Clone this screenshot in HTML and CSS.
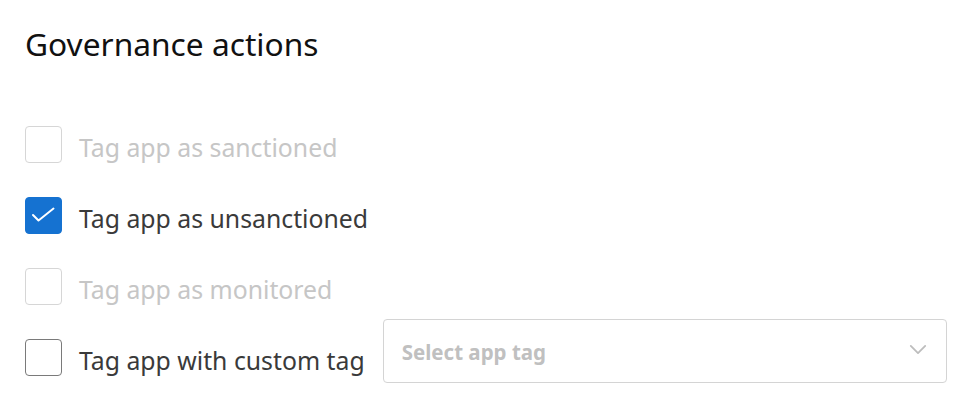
FILE: index.html
```html
<!DOCTYPE html>
<html lang="en">
<head>
<meta charset="utf-8">
<title>Governance actions</title>
<link rel="stylesheet" href="styles.css">
</head>
<body>
<section class="panel">
  <h1 class="title">Governance actions</h1>
  <div class="options">
    <label class="option is-disabled">
      <span class="box"></span>
      <span class="label">Tag app as sanctioned</span>
    </label>
    <label class="option">
      <span class="box is-checked">
        <svg viewBox="0 0 37 37" width="37" height="37"><path d="M8 18 L13.5 23.5 L28.5 11.5" fill="none" stroke="#fff" stroke-width="2" stroke-linecap="round" stroke-linejoin="round"/></svg>
      </span>
      <span class="label">Tag app as unsanctioned</span>
    </label>
    <label class="option is-disabled">
      <span class="box"></span>
      <span class="label">Tag app as monitored</span>
    </label>
    <div class="option option-custom">
      <span class="box"></span>
      <span class="label">Tag app with custom tag</span>
      <div class="select">
        <span class="select-text">Select app tag</span>
        <svg class="chevron" viewBox="0 0 20 12" width="18" height="11"><path d="M2 2 L10 10 L18 2" fill="none" stroke="#bdbdbd" stroke-width="2" stroke-linecap="round" stroke-linejoin="round"/></svg>
      </div>
    </div>
  </div>
</section>
</body>
</html>
```
FILE: styles.css
```css
html, body {
  margin: 0;
  padding: 0;
  background: #ffffff;
}
body {
  font-family: "Noto Sans", "Open Sans", sans-serif;
  color: #333333;
  min-height: 402px;
}
.panel {
  padding: 22px 0 30px 25px;
}
.title {
  margin: 0;
  font-size: 31.7px;
  font-weight: 400;
  line-height: 44px;
  color: #111111;
}
.options {
  display: flex;
  flex-direction: column;
  gap: 34px;
  margin-top: 60px;
}
.option {
  display: flex;
  align-items: center;
  height: 37px;
}
.box {
  box-sizing: border-box;
  width: 37px;
  height: 37px;
  border: 1.5px solid #7a7a7a;
  border-radius: 4px;
  display: flex;
  align-items: center;
  justify-content: center;
  flex: none;
  overflow: hidden;
}
.box svg {
  display: block;
  flex: none;
}
.box.is-checked {
  background: #1572d1;
  border-color: #1572d1;
}
.label {
  margin-left: 17px;
  padding-top: 5px;
  font-size: 24.8px;
  line-height: 37px;
  color: #3a3a3a;
}
.is-disabled .box {
  border-color: #d6d6d6;
}
.is-disabled .label {
  color: #c6c6c6;
}
.select {
  box-sizing: border-box;
  margin-left: 18px;
  margin-top: -14px;
  width: 564px;
  height: 64px;
  border: 1.5px solid #d4d4d4;
  border-radius: 4px;
  display: flex;
  align-items: center;
  justify-content: space-between;
  padding: 2px 19px 0 18px;
  flex: none;
}
.select-text {
  font-size: 20.5px;
  font-weight: 700;
  color: #c0c0c0;
}
.chevron {
  display: block;
  margin-top: -4px;
}
```
